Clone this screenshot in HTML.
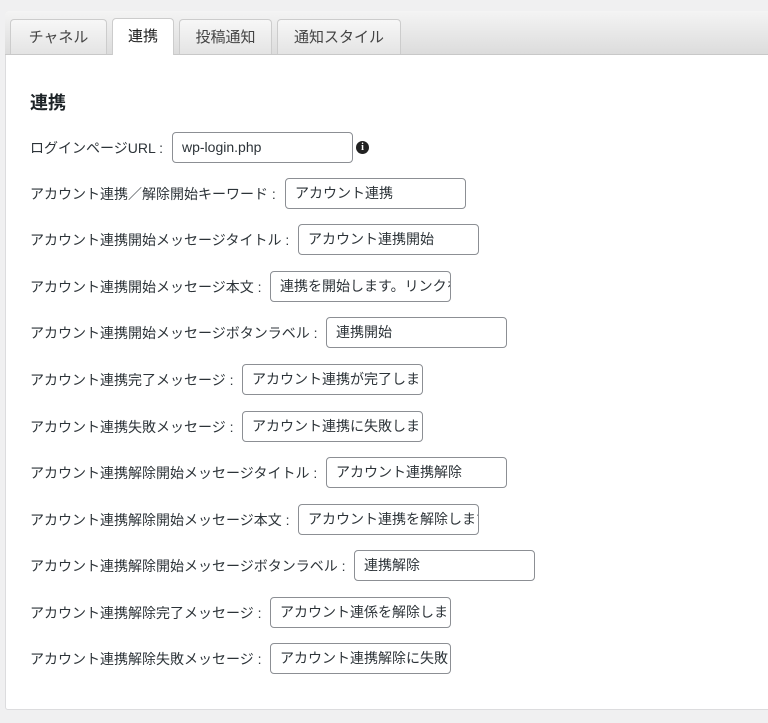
<!DOCTYPE html>
<html><head><meta charset="utf-8"><style>
body{margin:0;width:768px;height:723px;background:#f0f0f1;font-family:"Liberation Sans","Noto Sans CJK JP",sans-serif;color:#1d2327;position:relative;overflow:hidden}
.panel{position:absolute;left:5px;top:11px;width:770px;height:697px;background:#fff;border:1px solid #dcdcde;border-radius:3px}
.bar{position:absolute;left:5px;top:11px;width:770px;height:43px;background:linear-gradient(#f4f4f4,#dcdcdc);border-bottom:1px solid #c8c8c8;border-radius:3px 0 0 0}
.tab{position:absolute;top:19px;height:35px;background:linear-gradient(#f7f7f7,#e4e4e4);border:1px solid #ccc;border-bottom:none;border-radius:4px 4px 0 0;font-size:15px;line-height:35px;text-align:center;color:#444;box-sizing:border-box}
.tab.on{background:#fff;top:18px;height:37px;color:#222}
h2{position:absolute;left:30px;top:89px;margin:0;font-size:18px;font-weight:bold}
.l{position:absolute;left:30px;font-size:14px;line-height:20px;color:#2c3338;white-space:nowrap}
.i{position:absolute;height:31px;box-sizing:border-box;border:1px solid #8c8f94;border-radius:4px;font-size:14px;line-height:29px;padding-left:9px;overflow:hidden;white-space:nowrap;color:#2c3338;background:#fff}
.info{position:absolute;left:356px;top:141px;width:13px;height:13px;border-radius:50%;background:#222;color:#fff;font-size:10px;font-weight:bold;line-height:13px;text-align:center;font-family:"Liberation Serif",serif}
</style></head><body>
<div class="panel"></div>
<div class="bar"></div>
<div class="tab" style="left:10px;width:97px">チャネル</div>
<div class="tab on" style="left:112px;width:62px">連携</div>
<div class="tab" style="left:179px;width:93px">投稿通知</div>
<div class="tab" style="left:277px;width:124px">通知スタイル</div>
<h2>連携</h2>

<div class="l" style="top:138px">ログインページURL :</div><div class="i" style="left:172px;top:132px;width:181px">wp-login.php</div><div class="info">i</div>
<div class="l" style="top:184px">アカウント連携／解除開始キーワード :</div><div class="i" style="left:285px;top:178px;width:181px">アカウント連携</div>
<div class="l" style="top:230px">アカウント連携開始メッセージタイトル :</div><div class="i" style="left:298px;top:224px;width:181px">アカウント連携開始</div>
<div class="l" style="top:277px">アカウント連携開始メッセージ本文 :</div><div class="i" style="left:270px;top:271px;width:181px">連携を開始します。リンクをクリック</div>
<div class="l" style="top:323px">アカウント連携開始メッセージボタンラベル :</div><div class="i" style="left:326px;top:317px;width:181px">連携開始</div>
<div class="l" style="top:370px">アカウント連携完了メッセージ :</div><div class="i" style="left:242px;top:364px;width:181px">アカウント連携が完了しました</div>
<div class="l" style="top:417px">アカウント連携失敗メッセージ :</div><div class="i" style="left:242px;top:411px;width:181px">アカウント連携に失敗しました</div>
<div class="l" style="top:463px">アカウント連携解除開始メッセージタイトル :</div><div class="i" style="left:326px;top:457px;width:181px">アカウント連携解除</div>
<div class="l" style="top:510px">アカウント連携解除開始メッセージ本文 :</div><div class="i" style="left:298px;top:504px;width:181px">アカウント連携を解除します</div>
<div class="l" style="top:556px">アカウント連携解除開始メッセージボタンラベル :</div><div class="i" style="left:354px;top:550px;width:181px">連携解除</div>
<div class="l" style="top:603px">アカウント連携解除完了メッセージ :</div><div class="i" style="left:270px;top:597px;width:181px">アカウント連係を解除しました</div>
<div class="l" style="top:649px">アカウント連携解除失敗メッセージ :</div><div class="i" style="left:270px;top:643px;width:181px">アカウント連携解除に失敗しました</div>
</body></html>
